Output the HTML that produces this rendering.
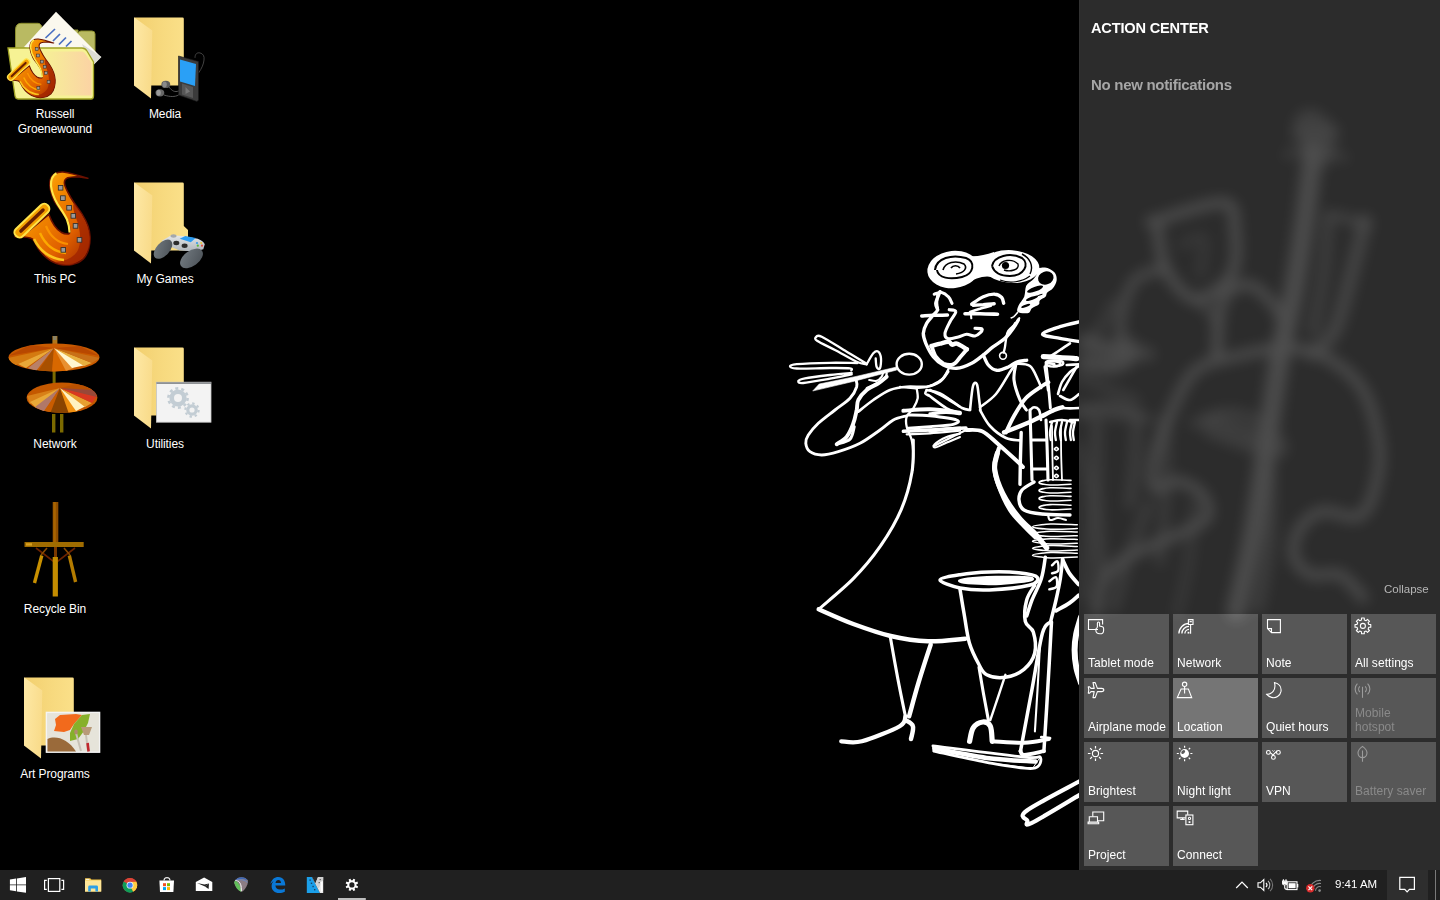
<!DOCTYPE html>
<html>
<head>
<meta charset="utf-8">
<title>Desktop</title>
<style>
*{box-sizing:border-box;margin:0;padding:0}
html,body{width:1440px;height:900px;overflow:hidden;background:#000;font-family:"Liberation Sans",sans-serif;}
#desk{position:absolute;left:0;top:0;width:1440px;height:900px;background:#000;overflow:hidden}
.abs{position:absolute}
/* desktop icons */
.dlabel{position:absolute;width:110px;text-align:center;color:#fff;font-size:12px;line-height:15px;letter-spacing:-0.1px;text-shadow:0 1px 2px #000}
/* action center */
#ac{position:absolute;left:1079px;top:0;width:361px;height:870px;background:#2c2c2c;overflow:hidden;box-shadow:inset 1px 0 0 #313131}
#ac h1,#ac .nn,#ac .col,.tile span,#clock{will-change:transform}
#ac h1{position:absolute;left:12.1px;top:19.4px;font-size:14.6px;line-height:18px;font-weight:bold;color:#fff;letter-spacing:-0.19px;white-space:nowrap}
#ac .nn{position:absolute;left:12px;top:76px;font-size:15px;font-weight:bold;color:#a6a6a6;letter-spacing:-0.3px}
#ac .col{position:absolute;right:11px;top:582px;font-size:11.5px;line-height:14px;color:#b6b6b6}
.tile{position:absolute;width:85px;height:60px;background:rgba(255,255,255,0.205);color:#fff;font-size:12px}
.tile.on{background:rgba(255,255,255,0.35)}
.tile.dis{color:#8a8a8a}
.tile span{position:absolute;left:4px;bottom:4px;line-height:14px;white-space:nowrap;letter-spacing:0.05px}
.tile svg{position:absolute;left:0;top:0}
/* taskbar */
#tb{position:absolute;left:0;top:870px;width:1440px;height:30px;background:#202020}
#clock{position:absolute;left:1335px;top:8px;color:#fff;font-size:11.5px;letter-spacing:0}
</style>
</head>
<body>
<div id="desk">
<!--WALL_START-->
<svg class="abs" style="left:0;top:0" width="1079" height="870" viewBox="0 0 1079 870">
<defs><filter id="wb"><feGaussianBlur stdDeviation="0.45"/></filter></defs><g filter="url(#wb)"><g fill="none" stroke="#fff" stroke-linecap="round" stroke-linejoin="round">
<path d="M940.0 291.7 C939.3 293.6 936.2 300.3 935.8 303.3 C935.4 306.4 937.9 308.1 937.5 310.0 C937.1 311.9 935.1 312.8 933.3 315.0 C931.5 317.2 928.3 320.3 926.7 323.3 C925.0 326.4 923.5 330.0 923.3 333.3 C923.2 336.7 924.2 339.4 925.8 343.3 C927.5 347.2 930.4 353.1 933.3 356.7 C936.2 360.3 939.4 363.1 943.3 365.0 C947.2 366.9 951.9 368.6 956.7 368.3 C961.4 368.1 967.2 365.6 971.7 363.3 C976.1 361.1 979.7 357.8 983.3 355.0 C986.9 352.2 989.7 349.4 993.3 346.7 C996.9 343.9 1001.7 341.4 1005.0 338.3 C1008.3 335.3 1011.1 331.4 1013.3 328.3 C1015.6 325.3 1017.5 321.4 1018.3 320.0" stroke-width="3.4"/>
<path d="M921.7 316.0 C923.6 315.9 929.0 315.5 933.3 315.3 C937.6 315.2 945.1 315.1 947.5 315.0" stroke-width="3.4"/>
<path d="M934.2 294.2 C935.4 293.9 939.3 292.1 941.7 292.5 C944.0 292.9 946.6 294.9 948.3 296.7 C950.1 298.5 951.4 302.2 952.0 303.3" stroke-width="3.1"/>
<path d="M937.5 295.0 C937.4 296.4 936.9 300.8 937.0 303.3 C937.1 305.8 937.8 308.9 938.0 310.0" stroke-width="2.6"/>
<path d="M971.7 304.2 C973.6 302.9 979.4 298.3 983.3 296.7 C987.2 295.0 991.9 294.0 995.0 294.2 C998.1 294.3 1000.2 296.0 1001.7 297.5 C1003.1 299.0 1003.3 302.4 1003.7 303.3" stroke-width="3.4"/>
<path d="M973.3 305.3 C975.0 305.2 979.9 304.9 983.3 304.7 C986.8 304.4 992.4 304.0 994.2 303.8" stroke-width="3.4"/>
<path d="M965.0 313.7 C967.5 313.7 974.6 313.6 980.0 313.7 C985.4 313.8 994.6 314.2 997.5 314.3" stroke-width="3.6"/>
<path d="M970.0 312.0 C971.7 311.4 976.5 309.7 980.0 308.7 C983.5 307.6 989.0 306.3 990.8 305.8" stroke-width="2.6"/>
<path d="M970.8 313.3 C970.9 314.2 971.2 317.5 971.3 318.3" stroke-width="2.1"/>
<path d="M949.2 309.7 C950.3 310.0 955.7 309.7 955.8 311.7 C956.0 313.7 951.8 318.1 950.0 321.7 C948.2 325.3 945.3 330.5 945.0 333.3 C944.7 336.2 946.1 338.1 948.3 338.7 C950.6 339.3 955.3 337.7 958.3 337.0 C961.4 336.3 963.9 334.5 966.7 334.3 C969.4 334.2 972.7 336.3 975.0 336.0 C977.3 335.7 979.2 333.8 980.3 332.7 C981.5 331.5 982.9 329.7 982.0 329.0 C981.1 328.3 976.2 328.4 975.0 328.3" stroke-width="3.1"/>
<path d="M931.3 346.0 C932.8 345.6 937.1 344.4 940.0 343.7 C942.9 342.9 946.7 341.5 948.7 341.7 C950.7 341.8 950.6 344.3 952.0 344.7 C953.4 345.0 954.5 342.9 957.0 343.7 C959.5 344.4 965.3 348.4 967.0 349.3" stroke-width="4.4"/>
<path d="M931.7 346.7 C932.4 348.3 933.8 353.8 935.8 356.7 C937.8 359.5 940.8 362.4 943.7 363.7 C946.6 364.9 950.6 365.4 953.3 364.3 C956.1 363.2 958.1 359.5 960.3 357.0 C962.6 354.5 965.9 350.6 967.0 349.3" stroke-width="3.9"/>
<path d="M1019.2 318.3 C1018.5 319.3 1016.8 322.1 1015.0 324.2 C1013.2 326.2 1009.8 328.6 1008.3 330.8 C1006.9 333.1 1006.9 334.9 1006.3 337.5 C1005.8 340.1 1005.4 344.2 1005.0 346.7 C1004.6 349.2 1003.9 351.5 1003.7 352.5" stroke-width="2.3"/>
<path d="M1015.0 323.3 C1014.3 324.6 1012.2 328.6 1010.8 330.8 C1009.4 333.1 1007.4 335.7 1006.7 336.7" stroke-width="2.3"/>
<path d="M983.3 355.0 C984.2 356.7 986.1 362.4 988.3 365.0 C990.6 367.6 993.3 370.0 996.7 370.3 C1000.0 370.7 1005.0 368.4 1008.3 367.0 C1011.7 365.6 1013.6 363.1 1016.7 362.0 C1019.7 360.9 1025.0 360.6 1026.7 360.3" stroke-width="3.4"/>
<path d="M948.3 370.0 C947.5 371.4 945.8 375.8 943.3 378.3 C940.8 380.8 937.8 383.3 933.3 385.0 C928.9 386.7 922.2 388.1 916.7 388.3 C911.1 388.6 902.8 386.9 900.0 386.7" stroke-width="2.1"/>
<path d="M1080.0 321.7 C1076.7 322.5 1066.2 324.6 1060.0 326.7 C1053.8 328.8 1042.5 332.2 1042.5 334.2 C1042.5 336.1 1053.8 337.1 1060.0 338.3 C1066.2 339.6 1076.7 341.1 1080.0 341.7" stroke-width="3.4"/>
<path d="M1070.0 343.3 C1068.3 344.4 1063.3 347.8 1060.0 350.0 C1056.7 352.2 1051.7 355.6 1050.0 356.7" stroke-width="2.6"/>
<path d="M1043.3 356.7 C1046.1 356.8 1054.4 357.2 1060.0 357.5 C1065.6 357.8 1073.9 358.5 1076.7 358.7" stroke-width="5.2"/>
<path d="M1080.0 364.2 C1077.8 364.3 1068.9 364.9 1066.7 365.0" stroke-width="2.6"/>
<path d="M1076.7 366.7 C1075.6 368.6 1072.2 374.4 1070.0 378.3 C1067.8 382.2 1064.4 388.1 1063.3 390.0" stroke-width="2.6"/>
<path d="M1045.0 366.7 C1045.3 368.6 1046.1 374.4 1046.7 378.3 C1047.2 382.2 1048.1 388.1 1048.3 390.0" stroke-width="3.1"/>
<path d="M866.7 363.7 C863.3 361.7 854.2 356.2 846.7 351.7 C839.2 347.2 826.8 339.1 821.7 336.7 C816.5 334.3 816.5 336.6 815.8 337.3 C815.1 338.1 814.3 338.9 817.5 341.0 C820.7 343.1 828.5 346.6 835.0 350.0 C841.5 353.4 851.4 359.3 856.7 361.7 C861.9 364.1 865.0 363.9 866.7 364.3" stroke-width="2.3"/>
<path d="M866.7 364.2 C867.8 362.4 871.4 355.4 873.3 353.3 C875.3 351.2 877.1 350.8 878.3 351.7 C879.6 352.5 880.7 355.6 881.0 358.3 C881.3 361.1 880.7 366.9 880.0 368.3 C879.3 369.8 877.4 368.7 876.7 367.0 C875.9 365.3 875.8 359.8 875.7 358.3" stroke-width="2.3"/>
<path d="M857.5 363.0 C852.9 363.0 840.1 362.6 830.0 362.8 C819.9 363.0 803.3 363.6 796.7 364.2 C790.0 364.8 790.0 365.6 790.0 366.3 C790.0 367.1 790.0 368.2 796.7 368.5 C803.3 368.8 821.1 368.0 830.0 368.0 C838.9 368.0 846.4 367.9 850.0 368.3 C853.6 368.7 851.1 370.0 851.3 370.3" stroke-width="2.3"/>
<path d="M851.7 373.0 C848.1 373.3 837.8 374.1 830.0 375.0 C822.2 375.9 810.3 377.3 805.0 378.3 C799.7 379.3 798.6 380.2 798.3 381.0 C798.1 381.8 798.1 383.4 803.3 383.0 C808.6 382.6 821.9 380.1 830.0 378.7 C838.1 377.2 848.1 375.1 851.7 374.3" stroke-width="2.3"/>
<path d="M813.0 390.7 L819.2 384.0 L855.0 376.7 L896.7 367.0 L896.7 370.0 L855.0 381.0 Z" stroke-width="0.6" fill="#fff"/>
<path d="M869.2 380.0 C870.4 380.1 874.6 381.4 876.7 380.8 C878.8 380.3 880.6 378.2 881.7 376.7 C882.8 375.1 883.1 372.5 883.3 371.7" stroke-width="2.1"/>
<path d="M886.7 373.3 C886.4 374.2 886.7 376.7 885.0 378.3 C883.3 380.0 879.7 381.7 876.7 383.3 C873.6 385.0 868.3 387.5 866.7 388.3" stroke-width="2.3"/>
<path d="M855.8 378.7 C856.0 380.0 857.6 383.4 856.7 386.7 C855.7 389.9 853.6 394.4 850.0 398.3 C846.4 402.2 840.3 405.8 835.0 410.0 C829.7 414.2 822.8 419.2 818.3 423.3 C813.9 427.5 810.4 431.7 808.3 435.0 C806.2 438.3 805.6 440.6 805.8 443.3 C806.1 446.1 807.4 449.7 810.0 451.7 C812.6 453.6 816.9 455.0 821.7 455.0 C826.4 455.0 831.9 453.6 838.3 451.7 C844.7 449.7 853.1 446.9 860.0 443.3 C866.9 439.7 874.4 433.9 880.0 430.0 C885.6 426.1 888.9 422.4 893.3 420.0 C897.8 417.6 904.4 416.5 906.7 415.8" stroke-width="2.9"/>
<path d="M836.7 444.2 C838.3 442.9 843.9 440.1 846.7 436.7 C849.4 433.2 851.7 427.8 853.3 423.3 C855.0 418.9 855.8 413.9 856.7 410.0 C857.5 406.1 856.7 403.3 858.3 400.0 C860.0 396.7 863.3 392.8 866.7 390.0 C870.0 387.2 875.0 385.6 878.3 383.3 C881.7 381.1 885.3 377.8 886.7 376.7" stroke-width="3.9"/>
<path d="M836.7 444.2 C838.9 443.3 847.1 442.1 850.0 439.2 C852.9 436.2 853.5 428.8 854.2 426.7" stroke-width="3.1"/>
<path d="M858.3 411.7 C860.8 409.7 868.1 403.6 873.3 400.0 C878.6 396.4 884.4 392.2 890.0 390.0 C895.6 387.8 900.6 387.2 906.7 386.7 C912.8 386.1 921.1 387.5 926.7 386.7 C932.2 385.8 936.4 384.2 940.0 381.7 C943.6 379.2 946.9 373.3 948.3 371.7" stroke-width="2.6"/>
<path d="M916.7 388.3 C916.8 390.0 918.2 395.0 917.7 398.3 C917.1 401.7 915.2 405.3 913.3 408.3 C911.5 411.4 907.8 413.6 906.7 416.7 C905.6 419.7 905.8 422.8 906.7 426.7 C907.5 430.6 910.6 435.6 911.7 440.0 C912.8 444.4 913.2 448.3 913.3 453.3 C913.5 458.3 912.6 467.2 912.5 470.0" stroke-width="2.3"/>
<path d="M903.3 410.8 C907.8 410.6 920.6 409.0 930.0 409.3 C939.4 409.6 955.0 412.1 960.0 412.7" stroke-width="3.9"/>
<path d="M908.3 415.0 C911.9 415.1 921.9 415.0 930.0 415.8 C938.1 416.7 952.8 418.6 956.7 420.0 C960.6 421.4 957.8 423.2 953.3 424.3 C948.9 425.4 937.5 426.0 930.0 426.7 C922.5 427.3 911.9 428.1 908.3 428.3" stroke-width="2.9"/>
<path d="M903.3 431.3 C907.8 431.1 920.6 430.5 930.0 430.0 C939.4 429.5 955.0 428.6 960.0 428.3" stroke-width="3.4"/>
<path d="M906.7 434.3 C910.6 434.2 921.1 433.9 930.0 433.3 C938.9 432.7 955.0 431.1 960.0 430.7" stroke-width="2.3"/>
<path d="M960.0 433.7 C957.8 434.2 951.0 435.2 946.7 437.0 C942.4 438.8 936.0 442.9 934.2 444.7 C932.4 446.4 933.8 447.7 935.8 447.3 C937.9 447.0 942.6 444.2 946.7 442.5 C950.7 440.8 957.8 437.9 960.0 437.0" stroke-width="2.1"/>
<path d="M926.7 390.0 C928.9 390.6 934.4 390.6 940.0 393.3 C945.6 396.1 956.7 404.4 960.0 406.7" stroke-width="2.6"/>
<path d="M928.3 395.0 C931.4 397.2 941.4 405.3 946.7 408.3 C951.9 411.4 957.8 412.5 960.0 413.3" stroke-width="2.6"/>
<path d="M926.7 390.0 C926.4 390.6 925.1 392.4 925.3 393.3 C925.6 394.2 927.8 395.0 928.3 395.3" stroke-width="2.6"/>
<path d="M970.0 410.0 C970.5 406.0 971.8 390.3 973.0 386.0 C974.2 381.7 976.0 382.1 977.0 384.4 C978.0 386.7 978.6 395.7 979.2 400.0 C979.8 404.3 980.2 408.3 980.4 410.0" stroke-width="2.6"/>
<path d="M930.0 390.0 C932.7 391.3 940.7 395.0 946.0 398.0 C951.3 401.0 958.0 406.0 962.0 408.0 C966.0 410.0 968.7 409.7 970.0 410.0" stroke-width="2.6"/>
<path d="M930.0 414.0 C932.7 413.7 941.0 412.5 946.0 412.4 C951.0 412.3 957.7 413.4 960.0 413.6" stroke-width="3.4"/>
<path d="M930.0 431.0 C932.7 430.7 940.0 429.5 946.0 429.0 C952.0 428.5 962.7 428.2 966.0 428.0" stroke-width="3.4"/>
<path d="M934.0 446.0 C936.7 444.7 944.7 440.7 950.0 438.0 C955.3 435.3 967.3 429.3 966.0 430.0 C964.7 430.7 947.3 439.3 942.0 442.0 C936.7 444.7 935.3 445.3 934.0 446.0" stroke-width="2.1"/>
<path d="M966.0 430.0 C968.7 430.2 976.7 428.9 982.0 431.2 C987.3 433.5 992.0 438.9 998.0 444.0 C1004.0 449.1 1013.8 458.2 1018.0 462.0 C1022.2 465.8 1022.2 466.2 1023.0 467.0" stroke-width="3.9"/>
<path d="M980.0 410.0 C981.7 412.7 985.7 421.3 990.0 426.0 C994.3 430.7 1001.0 435.6 1006.0 438.0 C1011.0 440.4 1017.7 440.0 1020.0 440.4" stroke-width="2.6"/>
<path d="M980.0 407.2 C982.7 405.0 991.0 399.9 996.0 394.0 C1001.0 388.1 1006.7 377.1 1010.0 372.0 C1013.3 366.9 1015.0 365.0 1016.0 363.6" stroke-width="2.6"/>
<path d="M1016.0 363.6 C1015.7 366.3 1013.3 373.9 1014.0 380.0 C1014.7 386.1 1017.9 395.0 1020.0 400.0 C1022.1 405.0 1025.3 408.3 1026.4 410.0" stroke-width="3.1"/>
<path d="M1016.0 363.6 C1018.3 364.0 1026.3 363.3 1030.0 366.0 C1033.7 368.7 1036.1 376.3 1038.0 380.0 C1039.9 383.7 1040.7 386.7 1041.2 388.0" stroke-width="2.6"/>
<path d="M930.0 386.0 C932.0 384.8 938.8 382.0 942.0 379.0 C945.2 376.0 947.8 369.8 949.0 368.0" stroke-width="2.1"/>
<path d="M999.0 448.0 C998.2 451.0 994.6 460.0 994.4 466.0 C994.2 472.0 995.4 476.7 998.0 484.0 C1000.6 491.3 1005.7 503.0 1010.0 510.0 C1014.3 517.0 1019.8 521.5 1024.0 526.0 C1028.2 530.5 1033.2 535.2 1035.0 537.0" stroke-width="4.2"/>
<path d="M1006.0 432.4 C1007.3 429.7 1010.7 421.7 1014.0 416.0 C1017.3 410.3 1021.3 403.0 1026.0 398.0 C1030.7 393.0 1038.3 388.6 1042.0 386.0 C1045.7 383.4 1047.3 383.0 1048.4 382.4" stroke-width="3.9"/>
<path d="M1004.0 432.4 C1008.3 430.7 1021.7 425.7 1030.0 422.0 C1038.3 418.3 1048.6 412.5 1054.0 410.0 C1059.4 407.5 1061.0 407.7 1062.4 407.2" stroke-width="4.4"/>
<path d="M1046.0 364.0 C1046.4 367.7 1047.7 378.7 1048.4 386.0 C1049.1 393.3 1050.1 404.3 1050.4 408.0" stroke-width="2.9"/>
<path d="M1021.2 432.4 C1021.1 437.0 1020.6 451.3 1020.4 460.0 C1020.2 468.7 1020.1 480.3 1020.0 484.4" stroke-width="3.4"/>
<path d="M1030.0 410.0 C1030.2 415.7 1030.7 432.3 1031.0 444.0 C1031.3 455.7 1031.8 474.0 1032.0 480.0" stroke-width="3.1"/>
<path d="M1046.0 420.0 C1046.2 425.0 1046.9 440.0 1047.2 450.0 C1047.5 460.0 1047.9 475.0 1048.0 480.0" stroke-width="3.1"/>
<path d="M1032.0 440.0 C1034.4 440.0 1044.0 440.0 1046.4 440.0" stroke-width="2.9"/>
<path d="M1032.0 469.0 C1034.5 469.0 1044.5 469.0 1047.0 469.0" stroke-width="2.9"/>
<path d="M1030.0 410.0 C1030.7 409.5 1032.5 407.2 1034.0 407.2 C1035.5 407.2 1037.8 407.9 1039.0 410.0 C1040.2 412.1 1040.7 418.3 1041.0 420.0" stroke-width="2.6"/>
<path d="M1054.4 449.0 C1054.4 448.5 1055.7 447.4 1056.4 447.4 C1057.1 447.4 1058.4 448.5 1058.4 449.0 C1058.4 449.5 1057.1 450.6 1056.4 450.6 C1055.7 450.6 1054.4 449.5 1054.4 449.0Z" stroke-width="1.6"/>
<path d="M1054.4 458.0 C1054.4 457.5 1055.7 456.4 1056.4 456.4 C1057.1 456.4 1058.4 457.5 1058.4 458.0 C1058.4 458.5 1057.1 459.6 1056.4 459.6 C1055.7 459.6 1054.4 458.5 1054.4 458.0Z" stroke-width="1.6"/>
<path d="M1054.4 468.0 C1054.4 467.5 1055.7 466.4 1056.4 466.4 C1057.1 466.4 1058.4 467.5 1058.4 468.0 C1058.4 468.5 1057.1 469.6 1056.4 469.6 C1055.7 469.6 1054.4 468.5 1054.4 468.0Z" stroke-width="1.6"/>
<path d="M1054.4 476.0 C1054.4 475.5 1055.7 474.4 1056.4 474.4 C1057.1 474.4 1058.4 475.5 1058.4 476.0 C1058.4 476.5 1057.1 477.6 1056.4 477.6 C1055.7 477.6 1054.4 476.5 1054.4 476.0Z" stroke-width="1.6"/>
<path d="M1052.0 426.0 C1052.1 431.0 1052.2 447.0 1052.4 456.0 C1052.6 465.0 1052.9 476.0 1053.0 480.0" stroke-width="1.8"/>
<path d="M1061.0 426.0 C1061.0 431.0 1061.0 447.0 1061.2 456.0 C1061.4 465.0 1061.9 476.0 1062.0 480.0" stroke-width="1.8"/>
<path d="M1052.0 422.0 C1051.7 423.7 1050.2 429.0 1050.0 432.0 C1049.8 435.0 1050.7 438.7 1050.8 440.0" stroke-width="2.3"/>
<path d="M1057.0 422.0 C1056.7 423.7 1055.2 429.0 1055.0 432.0 C1054.8 435.0 1055.7 438.7 1055.8 440.0" stroke-width="2.3"/>
<path d="M1062.0 422.0 C1061.7 423.7 1060.2 429.0 1060.0 432.0 C1059.8 435.0 1060.7 438.7 1060.8 440.0" stroke-width="2.3"/>
<path d="M1067.0 422.0 C1066.7 423.7 1065.2 429.0 1065.0 432.0 C1064.8 435.0 1065.7 438.7 1065.8 440.0" stroke-width="2.3"/>
<path d="M1072.0 422.0 C1071.7 423.7 1070.2 429.0 1070.0 432.0 C1069.8 435.0 1070.7 438.7 1070.8 440.0" stroke-width="2.3"/>
<path d="M1075.0 422.0 C1074.7 423.7 1073.2 429.0 1073.0 432.0 C1072.8 435.0 1073.7 438.7 1073.8 440.0" stroke-width="2.3"/>
<path d="M1050.0 422.0 C1052.0 421.7 1058.0 419.9 1062.0 420.0 C1066.0 420.1 1072.0 422.0 1074.0 422.4" stroke-width="2.3"/>
<path d="M1054.0 364.0 C1052.7 363.5 1046.7 363.3 1046.0 362.8 C1045.3 362.3 1047.3 361.0 1050.0 360.8 C1052.7 360.6 1060.0 360.9 1062.0 361.6 C1064.0 362.3 1063.3 364.1 1062.0 364.8 C1060.7 365.5 1055.3 366.1 1054.0 366.0 C1052.7 365.9 1055.3 364.5 1054.0 364.0Z" stroke-width="2.6"/>
<path d="M1058.0 394.0 C1058.7 392.0 1060.0 385.7 1062.0 382.0 C1064.0 378.3 1067.2 374.7 1070.0 372.0 C1072.8 369.3 1077.5 367.0 1079.0 366.0" stroke-width="2.6"/>
<path d="M1060.0 396.0 C1061.7 396.7 1066.8 400.3 1070.0 400.0 C1073.2 399.7 1077.5 395.0 1079.0 394.0" stroke-width="2.6"/>
<path d="M1062.0 408.0 C1063.3 408.1 1067.2 408.4 1070.0 408.4 C1072.8 408.4 1077.5 408.1 1079.0 408.0" stroke-width="2.6"/>
<path d="M1070.0 420.0 C1071.5 420.0 1077.5 420.0 1079.0 420.0" stroke-width="2.6"/>
<path d="M1034.0 482.0 C1032.0 483.3 1024.5 487.0 1022.0 490.0 C1019.5 493.0 1018.7 496.7 1019.0 500.0 C1019.3 503.3 1020.2 507.7 1024.0 510.0 C1027.8 512.3 1034.3 513.2 1042.0 514.0 C1049.7 514.8 1065.3 514.8 1070.0 515.0" stroke-width="3.4"/>
<path d="M1071.0 480.4 C1067.5 480.3 1055.3 479.5 1050.0 479.8 C1044.7 480.1 1039.0 481.5 1039.0 482.4 C1039.0 483.3 1044.7 484.7 1050.0 485.0 C1055.3 485.3 1067.5 484.3 1071.0 484.2" stroke-width="1.6"/>
<path d="M1071.0 488.4 C1067.5 488.3 1055.3 487.5 1050.0 487.8 C1044.7 488.1 1039.0 489.5 1039.0 490.4 C1039.0 491.3 1044.7 492.7 1050.0 493.0 C1055.3 493.3 1067.5 492.3 1071.0 492.2" stroke-width="1.6"/>
<path d="M1071.0 496.4 C1067.5 496.3 1055.3 495.5 1050.0 495.8 C1044.7 496.1 1039.0 497.5 1039.0 498.4 C1039.0 499.3 1044.7 500.7 1050.0 501.0 C1055.3 501.3 1067.5 500.3 1071.0 500.2" stroke-width="1.6"/>
<path d="M1071.0 505.2 C1067.5 505.1 1055.3 504.3 1050.0 504.6 C1044.7 504.9 1039.0 506.3 1039.0 507.2 C1039.0 508.1 1044.7 509.5 1050.0 509.8 C1055.3 510.1 1067.5 509.1 1071.0 509.0" stroke-width="1.6"/>
<path d="M1048.0 514.0 C1048.3 515.0 1048.3 519.3 1050.0 520.0 C1051.7 520.7 1055.3 518.0 1058.0 518.0 C1060.7 518.0 1064.7 519.7 1066.0 520.0" stroke-width="2.1"/>
<path d="M913.3 440.0 C913.1 445.3 914.0 460.4 912.0 472.0 C910.0 483.6 906.7 496.9 901.3 509.3 C896.0 521.8 888.0 535.1 880.0 546.7 C872.0 558.2 863.6 568.2 853.3 578.7 C843.1 589.1 824.4 604.2 818.7 609.3" stroke-width="3.1"/>
<path d="M818.7 609.3 C824.4 611.8 841.3 619.6 853.3 624.0 C865.3 628.4 878.2 633.1 890.7 636.0 C903.1 638.9 915.6 640.9 928.0 641.3 C940.4 641.8 959.1 639.1 965.3 638.7" stroke-width="4.5"/>
<path d="M997.3 453.3 C996.9 456.0 993.8 462.7 994.7 469.3 C995.6 476.0 998.7 485.3 1002.7 493.3 C1006.7 501.3 1013.3 510.7 1018.7 517.3 C1024.0 524.0 1030.0 528.2 1034.7 533.3 C1039.3 538.4 1044.7 545.6 1046.7 548.0" stroke-width="5.2"/>
<path d="M940.0 580.0 C940.0 577.8 951.8 576.0 960.0 574.7 C968.2 573.3 979.6 572.3 989.3 572.0 C999.1 571.7 1010.7 571.9 1018.7 572.8 C1026.7 573.7 1035.6 575.2 1037.3 577.3 C1039.1 579.4 1037.3 583.2 1029.3 585.3 C1021.3 587.4 1000.9 589.4 989.3 589.9 C977.8 590.3 968.2 589.6 960.0 588.0 C951.8 586.4 940.0 582.2 940.0 580.0Z" stroke-width="3.5"/>
<path d="M960.0 580.8 C960.0 579.9 984.0 578.2 996.0 577.9 C1008.0 577.6 1032.0 578.0 1032.0 578.9 C1032.0 579.8 1008.0 582.9 996.0 583.2 C984.0 583.5 960.0 581.7 960.0 580.8Z" stroke-width="4.2" fill="#fff"/>
<path d="M960.0 589.3 C960.7 593.3 962.4 604.4 964.0 613.3 C965.6 622.2 966.9 634.2 969.3 642.7 C971.8 651.1 975.8 658.7 978.7 664.0 C981.6 669.3 982.2 672.4 986.7 674.7 C991.1 676.9 999.1 678.2 1005.3 677.3 C1011.6 676.4 1019.1 673.3 1024.0 669.3 C1028.9 665.3 1033.1 659.6 1034.7 653.3 C1036.2 647.1 1034.9 637.3 1033.3 632.0 C1031.8 626.7 1026.4 626.7 1025.3 621.3 C1024.2 616.0 1025.1 606.0 1026.7 600.0 C1028.2 594.0 1033.3 587.8 1034.7 585.3" stroke-width="3.5"/>
<path d="M1077.3 524.8 C1072.9 524.7 1058.1 523.7 1050.7 524.0 C1043.2 524.3 1032.5 525.8 1032.5 526.7 C1032.5 527.6 1043.2 529.0 1050.7 529.3 C1058.1 529.6 1072.9 528.7 1077.3 528.5" stroke-width="1.5"/>
<path d="M1077.3 532.0 C1072.9 531.9 1058.1 530.9 1050.7 531.2 C1043.2 531.5 1032.5 533.0 1032.5 533.9 C1032.5 534.8 1043.2 536.2 1050.7 536.5 C1058.1 536.8 1072.9 535.9 1077.3 535.7" stroke-width="1.5"/>
<path d="M1077.3 539.5 C1072.9 539.3 1058.1 538.4 1050.7 538.7 C1043.2 539.0 1032.5 540.4 1032.5 541.3 C1032.5 542.2 1043.2 543.7 1050.7 544.0 C1058.1 544.3 1072.9 543.3 1077.3 543.2" stroke-width="1.5"/>
<path d="M1077.3 546.4 C1072.9 546.3 1058.1 545.3 1050.7 545.6 C1043.2 545.9 1032.5 547.4 1032.5 548.3 C1032.5 549.2 1043.2 550.6 1050.7 550.9 C1058.1 551.2 1072.9 550.3 1077.3 550.1" stroke-width="1.5"/>
<path d="M1077.3 553.3 C1072.9 553.2 1058.1 552.2 1050.7 552.5 C1043.2 552.8 1032.5 554.3 1032.5 555.2 C1032.5 556.1 1043.2 557.6 1050.7 557.9 C1058.1 558.2 1072.9 557.2 1077.3 557.1" stroke-width="1.5"/>
<path d="M1052.0 565.3 C1052.9 564.7 1056.3 560.4 1057.3 561.3 C1058.4 562.2 1059.0 568.7 1058.1 570.7 C1057.2 572.7 1053.0 572.9 1052.0 573.3" stroke-width="2.4"/>
<path d="M1049.3 581.3 C1050.4 580.7 1054.8 576.4 1056.0 577.3 C1057.2 578.2 1057.6 584.7 1056.5 586.7 C1055.4 588.7 1050.5 588.9 1049.3 589.3" stroke-width="2.4"/>
<path d="M1045.3 557.3 C1044.7 560.9 1043.6 571.6 1041.3 578.7 C1039.1 585.8 1034.4 593.8 1032.0 600.0 C1029.6 606.2 1027.6 613.3 1026.7 616.0" stroke-width="3.5"/>
<path d="M1062.7 558.7 C1062.3 562.0 1061.4 571.8 1060.3 578.7 C1059.2 585.6 1057.6 592.9 1056.0 600.0 C1054.4 607.1 1051.6 617.8 1050.7 621.3" stroke-width="3.5"/>
<path d="M1062.7 560.0 C1063.8 562.2 1066.7 569.2 1069.3 573.3 C1072.0 577.4 1077.1 582.7 1078.7 584.5" stroke-width="3.9"/>
<path d="M1056.0 610.7 C1058.2 609.4 1065.6 605.8 1069.3 603.2 C1073.1 600.6 1077.1 596.5 1078.7 595.2" stroke-width="3.9"/>
<path d="M890.3 637.0 C891.5 644.0 895.3 665.4 897.8 678.6 C900.3 691.8 904.1 710.0 905.4 716.3" stroke-width="3.1"/>
<path d="M930.7 644.6 C928.6 650.9 922.2 670.4 918.6 682.4 C915.0 694.3 910.7 710.7 909.1 716.3" stroke-width="4.5"/>
<path d="M905.4 716.3 C904.4 718.0 906.9 722.0 899.7 726.2 C892.5 730.3 871.7 738.7 861.9 741.3 C852.2 743.8 844.6 741.3 841.2 741.3" stroke-width="4.2"/>
<path d="M905.4 720.1 C906.6 721.1 912.0 723.0 912.9 726.2 C913.9 729.3 911.3 736.9 911.0 739.0" stroke-width="4.5"/>
<path d="M979.0 667.3 C979.7 671.7 982.0 684.9 983.5 693.7 C985.1 702.5 987.6 715.7 988.4 720.1" stroke-width="3.1"/>
<path d="M1005.4 674.8 C1004.2 678.6 1000.4 689.9 997.9 697.5 C995.4 705.0 991.6 716.3 990.3 720.1" stroke-width="2.4"/>
<path d="M969.6 741.3 C970.2 739.0 971.1 730.9 973.3 727.7 C975.5 724.5 979.9 722.3 982.8 722.0 C985.6 721.8 988.7 722.9 990.3 726.2 C991.9 729.4 991.9 738.7 992.2 741.3" stroke-width="5.2"/>
<path d="M992.2 741.3 C997.6 741.5 1014.9 743.1 1024.3 742.8 C1033.7 742.4 1044.8 739.6 1048.8 739.0" stroke-width="3.9"/>
<path d="M932.9 745.8 L1024.3 757.1 L1040.2 757.1 L1032.6 768.4 L986.5 762.4 L933.7 751.1 Z" stroke-width="1.0"/>
<path d="M934.4 748.4 C943.1 750.0 969.7 755.7 986.5 757.9 C1003.4 760.1 1027.4 761.0 1035.6 761.6" stroke-width="4.5"/>
<path d="M932.9 745.8 C948.2 747.7 1006.4 755.2 1024.3 757.1 C1042.2 759.0 1038.8 755.2 1040.2 757.1 C1041.5 759.0 1041.5 767.6 1032.6 768.4 C1023.7 769.3 1003.0 765.3 986.5 762.4 C970.1 759.5 942.5 753.0 933.7 751.1" stroke-width="2.8"/>
<path d="M1050.7 621.9 C1049.3 623.8 1045.6 621.9 1042.4 633.3 C1039.3 644.6 1035.5 670.3 1031.9 689.9 C1028.2 709.5 1022.4 740.9 1020.5 751.1" stroke-width="3.5"/>
<path d="M1051.5 621.9 C1050.9 633.3 1049.0 668.4 1047.7 689.9 C1046.5 711.4 1044.6 740.9 1043.9 751.1" stroke-width="3.5"/>
<path d="M1020.5 751.1 C1021.2 751.7 1020.4 754.9 1024.3 754.9 C1028.2 754.9 1040.7 751.7 1043.9 751.1" stroke-width="3.9"/>
<path d="M1041.3 737.1 C1042.7 737.3 1048.5 738.0 1050.0 738.2" stroke-width="2.8"/>
<path d="M1040.2 640.8 C1039.7 649.0 1038.4 674.8 1037.5 689.9 C1036.6 705.0 1035.3 724.5 1034.9 731.4" stroke-width="2.1"/>
<path d="M1081.0 617.0 C1080.2 619.8 1077.3 628.5 1076.2 634.0 C1075.1 639.5 1074.6 644.3 1074.6 650.0 C1074.6 655.7 1075.3 662.5 1076.4 668.0 C1077.5 673.5 1080.2 680.5 1081.0 683.0" stroke-width="6.0"/>
<path d="M1080.9 780.5 C1071.9 785.6 1035.5 804.1 1026.6 810.7 C1017.6 817.4 1026.4 818.5 1027.3 820.5 C1028.2 822.6 1022.9 827.2 1031.9 822.8 C1040.8 818.4 1072.8 798.9 1080.9 794.1" stroke-width="4.2"/>
</g>

<g>
<ellipse cx="953.3" cy="269.5" rx="26" ry="18.6" fill="#fff" transform="rotate(-6 953.3 269.5)"/>
<ellipse cx="1011" cy="266.5" rx="28.5" ry="16.4" fill="#fff" transform="rotate(4 1011 266.5)"/>
<path d="M968 256 Q981 257 994 252 L996 278 Q982 273 966 284 Z" fill="#fff"/>
<path d="M935 270 C936 258 952 254 966 258 C976 262 974 274 962 277 C950 280 938 278 937 270" fill="none" stroke="#000" stroke-width="2"/>
<path d="M943 270 C945 262 956 260 964 264 C968 268 964 273 956 274" fill="none" stroke="#000" stroke-width="1.6"/>
<path d="M951 268 C953 265 958 265 960 268" fill="none" stroke="#000" stroke-width="1.6"/>
<path d="M992 266 C994 256 1010 252 1022 258 C1030 264 1024 276 1010 276 C1000 276 994 272 992 266" fill="none" stroke="#000" stroke-width="2"/>
<path d="M999 266 C1001 260 1012 258 1018 264 C1020 270 1010 272 1004 270" fill="none" stroke="#000" stroke-width="1.4"/>
<circle cx="1005.5" cy="265.5" r="3.6" fill="#000"/>
<path d="M1022 254 C1030 258 1034 266 1030 274" fill="none" stroke="#000" stroke-width="1.4"/>
<path d="M1000 280 C1010 284 1022 282 1030 276" fill="none" stroke="#000" stroke-width="1.2"/>
</g><path d="M1034.6 269.7 C1036.0 268.6 1041.7 267.2 1045.0 267.6 C1048.3 268.0 1052.4 270.2 1054.4 272.3 C1056.3 274.4 1056.9 277.5 1056.7 280.1 C1056.5 282.7 1054.7 286.0 1053.1 288.1 C1051.6 290.2 1048.6 291.2 1047.3 292.6 C1046.0 294.0 1046.8 295.5 1045.5 296.8 C1044.3 298.1 1040.9 299.1 1039.8 300.4 C1038.7 301.7 1040.1 303.3 1038.8 304.6 C1037.4 305.9 1033.7 306.8 1032.0 308.2 C1030.2 309.6 1030.7 312.3 1028.3 312.9 C1026.0 313.6 1019.5 313.4 1017.9 312.1 C1016.3 310.8 1017.7 307.7 1018.8 305.1 C1019.8 302.6 1022.9 300.0 1024.2 296.8 C1025.4 293.6 1024.9 288.6 1026.2 285.8 C1027.6 283.1 1030.8 282.1 1032.5 280.1 C1034.2 278.1 1036.3 275.6 1036.7 273.9 C1037.0 272.1 1033.2 270.7 1034.6 269.7Z" fill="#fff"/>
<ellipse cx="1045.8" cy="278.0" rx="7.9" ry="6.5" fill="#000" transform="rotate(-20 1045.8 278.0)"/>
<ellipse cx="1035.1" cy="289.2" rx="8.5" ry="2.3" fill="#000" transform="rotate(-20 1035.1 289.2)"/>
<ellipse cx="1032.0" cy="298.3" rx="6.5" ry="1.6" fill="#000" transform="rotate(-20 1032.0 298.3)"/>
<ellipse cx="1025.7" cy="305.8" rx="4.8" ry="1.2" fill="#000" transform="rotate(-20 1025.7 305.8)"/>
<ellipse cx="1039.8" cy="295.0" rx="3.1" ry="0.6" fill="#000" transform="rotate(-20 1039.8 295.0)"/>
<path d="M1017.9 312.1 C1017.2 312.8 1015.0 315.6 1013.8 316.6 C1012.5 317.6 1011.1 317.9 1010.6 318.1" fill="none" stroke="#fff" stroke-width="1.6"/>
<ellipse cx="909.2" cy="364.2" rx="12.6" ry="10.4" fill="none" stroke="#fff" stroke-width="2.4"/>
<circle cx="1003" cy="355.8" r="3.4" fill="none" stroke="#fff" stroke-width="1.6"/>
<ellipse cx="1053.5" cy="364" rx="7" ry="2.6" fill="none" stroke="#fff" stroke-width="2.2"/>
</g></svg>
<!--WALL_END-->
<!--ICONS_START-->
<svg width="0" height="0" style="position:absolute">
<defs>
<linearGradient id="fb" x1="0" y1="0" x2="1" y2="0"><stop offset="0" stop-color="#f2cf6e"/><stop offset="0.5" stop-color="#f7d97e"/><stop offset="1" stop-color="#fbe18b"/></linearGradient>
<linearGradient id="ff" x1="0" y1="0" x2="1" y2="0.3"><stop offset="0" stop-color="#fee9a6"/><stop offset="1" stop-color="#f9dc8c"/></linearGradient>
<g id="folder">
<path d="M0.5 0.5 H48.5 Q49.8 0.5 49.8 1.8 V44 L54 48 V68.5 H0.5 Z" fill="url(#fb)"/>
<path d="M0 0.3 L18.3 13.6 L17 81.6 L0 68.4 Z" fill="url(#ff)"/>
</g>
<linearGradient id="sx" x1="0" y1="0" x2="1" y2="1"><stop offset="0" stop-color="#ffd23a"/><stop offset="0.35" stop-color="#f59000"/><stop offset="0.7" stop-color="#e06000"/><stop offset="1" stop-color="#9a2400"/></linearGradient>
<g id="sax">
<path d="M87.8 18.3 C80 15.8 72 13.2 63 12 C57 11.6 50.5 15 50 21.5 C49.4 27 50.5 33 54.4 41.1 C57 46 59.5 48.5 62.2 52.2 C65 56 66.6 58.5 67.8 61.1 C69.4 65 69.8 69 70 72.2 L68.9 73.9 C66 74.2 63.5 73.6 61.1 72.2 C58 70.2 56 68 54.4 65.6 C52 62 50.2 58 48.9 54.4 L30 70 L15 76.7 C22 77 28 76.6 32.2 78.9 C35 81 36 84.5 37.8 87.8 C40 91.5 43 95 46.7 97.8 C50.5 101 55 103.4 60 104.4 C64 105.2 68.4 105.2 72.2 104.4 C76.4 103.6 80.4 101.6 83.3 98.9 C86.2 96 88 92 88.9 87.8 C89.8 84 90.2 80.4 90 76.7 C89.8 73 89 69 87.8 65.6 C86.4 61.6 84.4 58 82.2 54.4 C79.8 50.6 77 47 74.4 43.3 C72 39.8 69.6 36 67.8 32.2 C66.2 29 64.6 26 64.4 23.3 C64.2 20.4 65.6 18.6 67.8 17.8 C70.4 17 73.6 16.8 76.7 16.7 C80.6 16.9 84.4 17.8 87.8 18.3 Z" fill="url(#sx)" stroke="#6a1000" stroke-width="1.6" stroke-linejoin="round"/>
<path d="M74 43 C82 54 89 66 90 78 C90.5 90 84 100 72 104.4 C66 105.6 60 104.6 54 102 C64 102 74 98 78 90 C82 80 80 68 76 58 C74 52 72 47 74 43 Z" fill="#a02400" opacity=".8"/>
<path d="M56.5 13.2 C52 15.5 50.6 20 51 26 C51.6 32 54 38 57.5 44 C61 49.5 64.5 54 67 59.5 C68.8 64 69.4 68 69.6 72.5" fill="none" stroke="#ffe84a" stroke-width="2.2"/>
<path d="M34 79 C39 90 50 99 64 100" fill="none" stroke="#ffd020" stroke-width="2.6" opacity=".9"/>
<path d="M40 73 C45 84 54 92 66 93" fill="none" stroke="#ffb400" stroke-width="2.4" opacity=".85"/>
<path d="M46 66 C50 76 58 83 68 84" fill="none" stroke="#ff9c00" stroke-width="2.2" opacity=".8"/>
<rect x="9.9" y="55.6" width="44" height="10" rx="4.6" transform="rotate(-43.6 31.9 60.6)" fill="#f4a000" stroke="#ffe44a" stroke-width="2"/>
<rect x="15" y="58.9" width="34" height="3.4" rx="1.7" transform="rotate(-43.6 31.9 60.6)" fill="#6a2000"/>
<g fill="#9a9a9a" stroke="#2a2a2a" stroke-width=".8"><rect x="58.3" y="25.5" width="4.6" height="4.6"/><rect x="60.6" y="35.8" width="4.6" height="4.6"/><rect x="66.8" y="45.5" width="4.6" height="4.6"/><rect x="71" y="53.6" width="4.6" height="4.6"/><rect x="73.2" y="63.6" width="4.6" height="4.6"/><rect x="77.2" y="77.6" width="4.6" height="4.6"/><rect x="61" y="87.6" width="4.6" height="4.6"/></g>
</g>
</defs>
</svg>

<!-- Russell Groenewound -->
<svg class="abs" style="left:0;top:0" width="110" height="110" viewBox="0 0 110 110">
<defs><linearGradient id="pch" x1="0" y1="0" x2="1" y2="0"><stop offset="0" stop-color="#f6f294"/><stop offset="0.45" stop-color="#f8e49c"/><stop offset="1" stop-color="#fbd3a4"/></linearGradient></defs>
<path d="M15.5 30 Q15.5 23.5 21 23.3 H38 Q40 23.3 41 25 L43.5 30 H78 V33 Q79 31 81 31 H92 Q95 31 95 34 V62 H15.5 Z" fill="#b9ba62" stroke="#8d8f2e" stroke-width="1"/>
<path d="M56 11.7 L101 57 L90 68 L24 47 Z" fill="#fbf8ee"/>
<path d="M101.5 57 L91 67.5 L82 44 Z" fill="#dcdcd4"/>
<g stroke="#4a6fc2" stroke-width="1.7"><path d="M45.5 38 L55 29"/><path d="M53 41 L60 34"/><path d="M59 44.5 L66 37.5"/><path d="M66 46.5 L71.5 41"/></g>
<path d="M8 48 H82 Q85 48 87 51 L93.5 62 V96 Q93.5 99 91 99 H18 Q15.5 99 15 96 Z" fill="#f6f294" stroke="#a0a224" stroke-width="1.3"/>
<path d="M40 51.5 H82 Q84 51.5 85.5 54 L91.5 63 V95.5 H44 Z" fill="url(#pch)"/>
<g transform="translate(-1.5,31.5) scale(0.63)"><use href="#sax"/></g>
</svg>
<div class="dlabel" style="left:0;top:107px">Russell<br>Groenewound</div>

<!-- Media -->
<svg class="abs" style="left:134px;top:17px;overflow:visible" width="80" height="90"><use href="#folder"/>
<path d="M61 40.8 C61 37 63 35.4 65.9 35.9 C69 36.6 70.6 39 70 43 C69.6 47 68 51 64.5 56" fill="none" stroke="#4a4a4a" stroke-width="0.9"/>
<path d="M44.5 39 L64.5 44.5 L64.5 83 L63 84.5 L44.5 78 Z" fill="#3b3b3b" stroke="#1a1a1a" stroke-width=".6"/>
<path d="M46 42.5 L62 47 L61 69 L46 64.5 Z" fill="#2aa0f6"/>
<path d="M48 66.5 L59 70 L59 81 L48 77.5 Z" fill="#565656"/>
<path d="M51.5 70 L56 74.5 L51.5 77 Z" fill="#777"/>
<ellipse cx="31.8" cy="67.4" rx="4.4" ry="3.6" fill="#5c5c5c"/><ellipse cx="30.6" cy="67.4" rx="2.2" ry="3" fill="#8a8a8a"/><ellipse cx="25.9" cy="75.8" rx="4.4" ry="3.6" fill="#666"/><ellipse cx="24.6" cy="75.8" rx="2.2" ry="3" fill="#9a9a9a"/>
<path d="M35 70 C38 74 41 75.5 44.5 74 M30 78 C36 80 41 80 44.5 78" fill="none" stroke="#555" stroke-width="1"/>
</svg>
<div class="dlabel" style="left:110px;top:107px">Media</div>

<!-- This PC -->
<svg class="abs" style="left:0;top:160px" width="110" height="110"><use href="#sax"/></svg>
<div class="dlabel" style="left:0;top:272px">This PC</div>

<!-- My Games -->
<svg class="abs" style="left:134px;top:182px;overflow:visible" width="80" height="90"><use href="#folder"/>
<defs><linearGradient id="gp" x1="0" y1="0" x2="0" y2="1"><stop offset="0" stop-color="#e4e7ea"/><stop offset="1" stop-color="#aeb4ba"/></linearGradient>
<linearGradient id="gr" x1="0" y1="0" x2="1" y2="1"><stop offset="0" stop-color="#747c82"/><stop offset="1" stop-color="#4a5056"/></linearGradient></defs>
<path d="M27.7 58.8 L37.4 53.3 L48.5 54 L63.8 56.8 Q70.7 60 70.7 62.5 L69.3 67.2 L61 69.5 L45.7 68.5 L37.4 65 Z" fill="url(#gp)"/>
<ellipse cx="29" cy="67.2" rx="11.6" ry="6.6" transform="rotate(-47 29 67.2)" fill="url(#gr)"/>
<ellipse cx="57.5" cy="76.4" rx="13" ry="7.6" transform="rotate(-36 57.5 76.4)" fill="url(#gr)"/>
<path d="M45.7 56.8 L51.3 54 L61.7 56 L56.8 60.2 Z" fill="#2b9cf2"/>
<ellipse cx="39.5" cy="54" rx="3" ry="1.7" fill="#a4a8ac"/>
<ellipse cx="42.3" cy="61" rx="3" ry="2.2" fill="#2c2c2c"/><ellipse cx="50.6" cy="63.7" rx="3" ry="2.2" fill="#2c2c2c"/>
<circle cx="63" cy="61" r="1.1" fill="#3a9be8"/><circle cx="67.2" cy="61" r="1.1" fill="#e8c83a"/><circle cx="63.8" cy="63.7" r="1.1" fill="#58b838"/><circle cx="68" cy="63.7" r="1.1" fill="#e05040"/>
</svg>
<div class="dlabel" style="left:110px;top:272px">My Games</div>

<!-- Network (cymbals) -->
<svg class="abs" style="left:0;top:330px" width="110" height="110">
<defs><clipPath id="c1"><ellipse cx="54" cy="27.4" rx="45.5" ry="14"/></clipPath><clipPath id="c2"><ellipse cx="62" cy="67.8" rx="35.4" ry="15.2"/></clipPath></defs>
<rect x="52.4" y="6" width="5" height="13" fill="#b0761a"/><rect x="53" y="6" width="3.6" height="4" fill="#8a8266"/>
<rect x="52.6" y="41" width="3" height="13" fill="#7c6a00"/>
<rect x="52" y="84" width="3.4" height="18.5" fill="#7c6a00"/><rect x="60" y="84" width="3.4" height="18.5" fill="#7c6a00"/>
<g clip-path="url(#c1)"><rect x="0" y="10" width="110" height="35" fill="#c85a00"/>
<path d="M54 18 L8 28 L14 36 Z" fill="#d47a10"/><path d="M54 18 L18 34 L26 38 Z" fill="#e8a838"/><path d="M54 18 L28 38 L36 41 Z" fill="#b88068"/><path d="M54 18 L38 41 L52 42 Z" fill="#a85000"/>
<path d="M54 18 L52 42 L68 41 Z" fill="#d86800"/><path d="M54 18 L66 41 L74 38 Z" fill="#e89030"/><path d="M54 18 L72 38 L86 35 Z" fill="#fff6d0"/><path d="M54 18 L84 36 L92 33 Z" fill="#e8b040"/><path d="M54 18 L92 33 L100 28 Z" fill="#c87018"/>
<path d="M54 18 L8 26 L30 15 Z" fill="#b84800"/><path d="M54 18 L100 26 L80 16 Z" fill="#b84800"/></g>
<g clip-path="url(#c2)"><rect x="20" y="50" width="90" height="35" fill="#c45800"/>
<path d="M60 58 L27 66 L30 74 Z" fill="#d88018"/><path d="M60 58 L30 72 L36 78 Z" fill="#e8a838"/><path d="M60 58 L35 77 L44 82 Z" fill="#b07868"/><path d="M60 58 L44 81 L52 84 Z" fill="#c85c00"/><path d="M60 58 L50 84 L70 84 Z" fill="#8a4400"/>
<path d="M60 58 L69 84 L78 81 Z" fill="#f09010"/><path d="M60 58 L76 81 L86 76 Z" fill="#fff2c0"/><path d="M60 58 L85 77 L92 73 Z" fill="#e8a030"/><path d="M60 58 L92 73 L97 66 Z" fill="#d83820"/><path d="M60 58 L97 67 L94 58 Z" fill="#984838"/><path d="M60 58 L94 60 L80 53 Z" fill="#b85000"/></g>
</svg>
<div class="dlabel" style="left:0;top:437px">Network</div>

<!-- Utilities -->
<svg class="abs" style="left:134px;top:347px;overflow:visible" width="80" height="90"><use href="#folder"/>
<rect x="22.4" y="35.2" width="54.6" height="40" fill="#f3f3f3" stroke="#c4c4c4" stroke-width=".8"/>
<rect x="22.4" y="35.2" width="54.6" height="1.8" fill="#8e9194"/>
<g fill="none" stroke="#c3cdd4"><circle cx="44" cy="51" r="6.3" stroke-width="4.6"/><circle cx="44" cy="51" r="9.6" stroke-width="2.6" stroke-dasharray="3 3.03"/><circle cx="58" cy="63" r="4.2" stroke-width="3.2"/><circle cx="58" cy="63" r="6.6" stroke-width="2.2" stroke-dasharray="2.4 2.78"/></g>
</svg>
<div class="dlabel" style="left:110px;top:437px">Utilities</div>

<!-- Recycle Bin (stand) -->
<svg class="abs" style="left:0;top:495px" width="110" height="110">
<rect x="52.7" y="7" width="5.6" height="41" fill="#8e4e00"/><rect x="53.4" y="7" width="2.4" height="41" fill="#a86400"/>
<path d="M36 53 L55.5 68 L75 53" fill="none" stroke="#6a2200" stroke-width="1.6"/>
<path d="M41 60 L47 53 M70 60 L64 53" fill="none" stroke="#8a4a00" stroke-width="1.6"/>
<rect x="54" y="50" width="3" height="14" fill="#7a3800"/>
<rect x="24.5" y="47" width="59.2" height="5" fill="#a06c00"/><rect x="26" y="48.2" width="6" height="2.4" fill="#d8a020"/>
<rect x="52.7" y="62" width="5.2" height="39.5" fill="#c48c00"/>
<path d="M41.8 60.5 L34.5 88" stroke="#c89000" stroke-width="3.4" fill="none"/>
<path d="M69.3 60.5 L75.6 87" stroke="#b47c00" stroke-width="3.4" fill="none"/>
</svg>
<div class="dlabel" style="left:0;top:602px">Recycle Bin</div>

<!-- Art Programs -->
<svg class="abs" style="left:24px;top:677px;overflow:visible" width="80" height="90"><use href="#folder"/>
<rect x="22.4" y="35.4" width="53.2" height="39.8" fill="#e6e4da" stroke="#f4f4f4" stroke-width="1.4"/>
<path d="M31 42 L36 38 L52 37 L58 38 L50 47 L46 53 L40 55 L30 54 L32 48 Z" fill="#f26a1c"/>
<path d="M58 38 L66 37 L64 46 L60 54 L54 62 L46 64 L46 56 L50 47 Z" fill="#86b02a"/>
<path d="M23.5 62 C32 58 44 62 52 74.5 H23.5 Z" fill="#9a6a3a"/>
<path d="M52 56 L57 74 M62 58 L64 74" stroke="#c8c2b6" stroke-width="2" fill="none"/>
<path d="M63.6 66 L64.6 74.5" stroke="#c0282c" stroke-width="2.6"/>
<path d="M57 50 L68 50 L65 58 L60 58 Z" fill="#b89a78"/>
<ellipse cx="52" cy="55" rx="1.8" ry="2.4" fill="#b08a6a"/>
</svg>
<div class="dlabel" style="left:0;top:767px">Art Programs</div>
<!--ICONS_END-->
<div id="ac">
<!--ACBG_START-->
<svg class="abs" style="left:0;top:0" width="361" height="870" viewBox="0 0 361 870"><defs><filter id="bl" x="-20%" y="-20%" width="140%" height="140%"><feGaussianBlur stdDeviation="6.5"/></filter></defs>
<g fill="none" stroke="#fff" stroke-linecap="round" stroke-linejoin="round" filter="url(#bl)" opacity="0.16">
<path d="M231.0 126.0 C232.5 127.4 238.5 130.3 239.7 134.7 C240.9 139.0 238.3 149.1 238.0 152.0" stroke-width="34.0" stroke-opacity="0.55"/>
<path d="M219.5 134.7 C225.3 134.2 248.4 132.2 254.1 131.8" stroke-width="16.0" stroke-opacity="0.35"/>
<path d="M207.9 154.9 C211.8 153.9 221.4 148.6 231.0 149.1 C240.7 149.6 259.9 156.3 265.7 157.8" stroke-width="8.0" stroke-opacity="0.50"/>
<path d="M233.9 152.0 C232.7 162.6 229.6 192.4 226.4 215.5 C223.2 238.6 219.2 266.5 214.9 290.6 C210.5 314.7 205.2 332.0 200.4 359.9 C195.6 387.8 190.5 428.3 186.0 458.1 C181.5 488.0 178.1 513.5 173.3 539.0 C168.5 564.5 159.8 599.1 157.1 611.2" stroke-width="20.0" stroke-opacity="0.90"/>
<path d="M285.9 221.3 C283.7 230.0 277.7 255.0 272.6 273.3 C267.5 291.6 262.0 317.6 255.3 331.0 C248.6 344.5 236.0 350.3 232.2 354.1" stroke-width="14.0" stroke-opacity="0.70"/>
<path d="M249.5 215.5 C248.8 225.1 247.5 254.0 244.9 273.3 C242.3 292.5 235.8 321.4 233.9 331.0" stroke-width="10.0" stroke-opacity="0.60"/>
<path d="M254.1 215.5 C259.9 217.0 283.0 222.7 288.8 224.2" stroke-width="10.0" stroke-opacity="0.60"/>
<path d="M76.2 221.3 C87.3 217.7 131.1 201.7 144.4 202.8 C157.7 204.0 154.5 216.5 156.0 228.2 C157.4 240.0 159.6 261.4 153.1 273.3 C146.5 285.1 127.7 300.0 116.7 299.3 C105.6 298.5 93.1 281.2 86.6 268.7 C80.2 256.1 79.7 232.1 78.0 224.2 C76.2 216.3 65.2 224.9 76.2 221.3Z" stroke-width="11.0" stroke-opacity="0.90"/>
<path d="M104.0 244.4 C107.3 243.4 121.3 233.8 124.2 238.6 C127.1 243.4 121.8 267.5 121.3 273.3" stroke-width="10.0" stroke-opacity="0.35"/>
<path d="M86.6 268.7 C81.5 270.6 63.5 271.7 56.0 280.2 C48.5 288.7 43.6 307.2 41.6 319.5 C39.6 331.8 43.5 348.4 43.9 354.1" stroke-width="10.0" stroke-opacity="0.80"/>
<path d="M116.7 299.3 C119.9 302.6 132.3 310.3 135.7 319.5 C139.2 328.6 137.2 348.4 137.5 354.1" stroke-width="9.0" stroke-opacity="0.60"/>
<path d="M137.5 354.1 C138.6 345.0 138.4 310.6 144.4 299.3 C150.4 287.9 163.5 282.4 173.3 286.0 C183.1 289.5 199.3 308.1 203.3 320.6 C207.4 333.2 198.5 354.3 197.5 361.1" stroke-width="11.0" stroke-opacity="0.85"/>
<path d="M86.6 423.5 C91.5 414.8 103.0 382.8 115.5 371.5 C128.0 360.1 147.3 359.1 161.7 355.3 C176.2 351.4 188.7 348.4 202.2 348.4 C215.6 348.4 229.1 348.6 242.6 355.3 C256.1 362.0 273.4 373.6 283.0 388.8 C292.7 404.0 298.4 429.2 300.4 446.6 C302.3 463.9 298.2 481.0 294.6 492.8 C290.9 504.5 286.9 513.9 278.4 517.0 C269.9 520.1 253.4 509.3 243.7 511.3 C234.1 513.2 225.5 521.1 220.6 528.6 C215.8 536.1 212.9 548.6 214.9 556.3 C216.8 564.0 224.5 571.7 232.2 574.8 C239.9 577.9 252.4 570.9 261.1 574.8 C269.7 578.6 280.3 594.0 284.2 597.9" stroke-width="11.0" stroke-opacity="0.85"/>
<path d="M86.6 423.5 C84.7 429.2 77.0 447.3 75.1 458.1 C73.2 468.9 71.2 484.3 75.1 488.1 C78.9 492.0 90.3 480.3 98.2 481.2 C106.1 482.2 117.4 488.0 122.5 493.9 C127.5 499.9 132.1 510.3 128.2 517.0 C124.4 523.8 112.8 527.6 99.3 534.4 C85.9 541.1 59.9 549.8 47.4 557.5 C34.8 565.2 29.3 571.6 24.3 580.6 C19.3 589.5 18.5 606.1 17.3 611.2" stroke-width="11.0" stroke-opacity="0.85"/>
<path d="M135.7 426.3 C141.0 428.3 157.4 434.5 167.5 437.9 C177.6 441.3 191.6 445.1 196.4 446.6" stroke-width="26.0" stroke-opacity="0.50"/>
<path d="M115.5 423.5 C121.3 421.5 137.7 411.9 150.2 411.9 C162.7 411.9 183.9 421.5 190.6 423.5" stroke-width="10.0" stroke-opacity="0.50"/>
<path d="M5.8 342.6 C9.6 343.6 21.2 346.4 28.9 348.4 C36.6 350.3 51.0 351.3 52.0 354.1 C52.9 357.0 42.4 364.3 34.7 365.7 C27.0 367.1 10.6 363.3 5.8 362.8" stroke-width="16.0" stroke-opacity="0.80"/>
<path d="M0.0 409.0 C5.8 408.5 24.5 405.2 34.7 406.1 C44.8 407.1 56.3 413.3 60.6 414.8" stroke-width="9.0" stroke-opacity="0.70"/>
<path d="M17.3 423.5 C17.5 436.9 17.5 478.3 18.5 504.3 C19.4 530.3 22.3 566.9 23.1 579.4" stroke-width="9.0" stroke-opacity="0.60"/>
<path d="M57.8 423.5 C57.3 431.2 56.0 456.2 54.9 469.7 C53.7 483.1 51.5 498.5 50.8 504.3" stroke-width="9.0" stroke-opacity="0.60"/>
<path d="M0.0 377.2 C4.8 379.2 19.3 384.9 28.9 388.8 C38.5 392.7 52.9 398.4 57.8 400.4" stroke-width="8.0" stroke-opacity="0.50"/>
<path d="M34.7 302.2 C32.7 306.0 27.0 319.5 23.1 325.3 C19.3 331.0 13.5 334.9 11.6 336.8" stroke-width="8.0" stroke-opacity="0.50"/>
<path d="M69.3 504.3 C66.4 512.0 57.8 533.2 52.0 550.5 C46.2 567.9 37.5 598.7 34.7 608.3" stroke-width="9.0" stroke-opacity="0.55"/>
<path d="M190.6 469.7 C190.6 481.2 192.5 515.9 190.6 539.0 C188.7 562.1 181.0 596.7 179.1 608.3" stroke-width="12.0" stroke-opacity="0.50"/>
<path d="M87.8 417.7 C87.6 430.2 87.8 468.7 86.6 492.8 C85.5 516.8 81.8 550.5 80.9 562.1" stroke-width="9.0" stroke-opacity="0.50"/>
<path d="M49.1 342.6 C50.5 343.9 54.4 348.8 57.8 350.7 C61.1 352.6 67.4 353.6 69.3 354.1" stroke-width="14.0" stroke-opacity="0.60"/>
<path d="M0.0 414.8 C7.7 415.1 34.2 415.9 46.2 416.5 C58.2 417.2 67.9 418.5 72.2 418.8" stroke-width="8.0" stroke-opacity="0.50"/>
<path d="M0.0 446.6 C1.9 456.2 10.6 479.3 11.6 504.3 C12.5 529.3 6.7 581.3 5.8 596.7" stroke-width="10.0" stroke-opacity="0.40"/>
<path d="M115.5 504.3 C114.6 513.9 112.6 543.8 109.7 562.1 C106.9 580.4 100.1 605.4 98.2 614.1" stroke-width="9.0" stroke-opacity="0.40"/>
</g></svg>
<!--ACBG_END-->
<h1>ACTION CENTER</h1>
<div class="nn">No new notifications</div>
<div class="col">Collapse</div>
<div class="tile " style="left:5px;top:614px"><!--i-tablet--><svg width="28" height="26" viewBox="0 0 28 26" style="left:0;top:0" fill="none" stroke="#fff" stroke-width="1.1"><path d="M14 15.5 H4.5 V5.6 H18.6 V10.5"/><path d="M13.4 13.5 V9.2 Q13.4 8 14.5 8 Q15.6 8 15.6 9.2 V12 L18.4 12.8 Q19.6 13.2 19.6 14.6 V16.4 Q19.6 19.8 15.8 19.8 Q12 19.8 11.8 16 Q11.7 14.4 13.4 13.5"/></svg><span>Tablet mode</span></div>
<div class="tile " style="left:94px;top:614px"><!--i-net--><svg width="28" height="26" viewBox="0 0 28 26" style="left:0;top:0" fill="none" stroke="#fff" stroke-width="1.1"><path d="M5.9 19.6 A10.2 10.2 0 0 1 16 9.4 M8.9 19.6 A7.2 7.2 0 0 1 16 12.4 M11.9 19.6 A4.2 4.2 0 0 1 16 15.4" stroke-width="1.3"/><rect x="14.6" y="17.8" width="1.8" height="1.8" fill="#fff" stroke="none"/><path d="M17.6 19.8 V10.5 M15.4 5.6 H20 V10.5 H15.4 Z M16.6 7.6 H18.8"/></svg><span>Network</span></div>
<div class="tile " style="left:183px;top:614px"><!--i-note--><svg width="28" height="26" viewBox="0 0 28 26" style="left:0;top:0" fill="none" stroke="#fff" stroke-width="1.1"><path d="M9.5 18.6 H18.4 V5.6 H5.5 V14.6 Z M5.5 14.6 H9.5 V18.6"/></svg><span>Note</span></div>
<div class="tile " style="left:272px;top:614px"><!--i-gear--><svg width="28" height="26" viewBox="0 0 28 26" style="left:0;top:0" fill="none" stroke="#fff" stroke-width="1.1"><path d="M19.78 10.52 L19.78 13.28 L17.83 13.32 L17.10 15.09 L18.45 16.50 L16.50 18.45 L15.09 17.10 L13.32 17.83 L13.28 19.78 L10.52 19.78 L10.48 17.83 L8.71 17.10 L7.30 18.45 L5.35 16.50 L6.70 15.09 L5.97 13.32 L4.02 13.28 L4.02 10.52 L5.97 10.48 L6.70 8.71 L5.35 7.30 L7.30 5.35 L8.71 6.70 L10.48 5.97 L10.52 4.02 L13.28 4.02 L13.32 5.97 L15.09 6.70 L16.50 5.35 L18.45 7.30 L17.10 8.71 L17.83 10.48Z" stroke-linejoin="round"/><circle cx="11.9" cy="11.9" r="2.5"/></svg><span>All settings</span></div>
<div class="tile " style="left:5px;top:678px"><!--i-plane--><svg width="28" height="26" viewBox="0 0 28 26" style="left:0;top:0" fill="none" stroke="#fff" stroke-width="1.1"><path d="M19.8 12 Q19.8 10.4 17.6 10.4 H13.4 L11.2 4.6 H9 L10.2 10.4 H7 L5.6 8.8 H4.3 L4.8 12 L4.3 15.2 H5.6 L7 13.6 H10.2 L9 19.6 H11.2 L13.4 13.6 H17.6 Q19.8 13.6 19.8 12 Z" stroke-linejoin="round"/></svg><span>Airplane mode</span></div>
<div class="tile on" style="left:94px;top:678px"><!--i-loc--><svg width="28" height="26" viewBox="0 0 28 26" style="left:0;top:0" fill="none" stroke="#fff" stroke-width="1.1"><circle cx="11.6" cy="6.3" r="2.2"/><path d="M11.6 8.5 V15.6 M8.1 11 H15.4 L18.7 19.6 H4.3 Z"/></svg><span>Location</span></div>
<div class="tile " style="left:183px;top:678px"><!--i-moon--><svg width="28" height="26" viewBox="0 0 28 26" style="left:0;top:0" fill="none" stroke="#fff" stroke-width="1.1"><path d="M12.4 4.5 C17 5.5 19.6 9 19 13.4 C18.2 18 13.8 20.6 9.6 19.4 C7.4 18.8 5.6 17.6 4.4 16.2 C9.6 16.6 14.6 12 12.4 4.5 Z" stroke-linejoin="round"/></svg><span>Quiet hours</span></div>
<div class="tile dis" style="left:272px;top:678px"><!--i-hot--><svg width="28" height="26" viewBox="0 0 28 26" style="left:0;top:0" fill="none" stroke="#9c9c9c" stroke-width="1.1"><path d="M11.5 8.8 V19.8"/><path d="M8.8 8.4 A4 4 0 0 0 8.8 14 M14.2 8.4 A4 4 0 0 1 14.2 14 M6.4 5.6 A7.6 7.6 0 0 0 6.4 16.4 M16.6 5.6 A7.6 7.6 0 0 1 16.6 16.4"/></svg><span>Mobile<br>hotspot</span></div>
<div class="tile " style="left:5px;top:742px"><!--i-sun--><svg width="28" height="26" viewBox="0 0 28 26" style="left:0;top:0" fill="none" stroke="#fff" stroke-width="1.1"><circle cx="11.5" cy="11.5" r="3.1"/><path d="M16.50 11.50 L19.10 11.50 M15.04 15.04 L16.87 16.87 M11.50 16.50 L11.50 19.10 M7.96 15.04 L6.13 16.87 M6.50 11.50 L3.90 11.50 M7.96 7.96 L6.13 6.13 M11.50 6.50 L11.50 3.90 M15.04 7.96 L16.87 6.13 " stroke-width="1.2"/></svg><span>Brightest</span></div>
<div class="tile " style="left:94px;top:742px"><!--i-night--><svg width="28" height="26" viewBox="0 0 28 26" style="left:0;top:0" fill="none" stroke="#fff" stroke-width="1.1"><circle cx="11.6" cy="11.5" r="4.4" fill="#fff" stroke="none"/><ellipse cx="10.2" cy="10" rx="2.2" ry="1.5" transform="rotate(-40 10.2 10)" fill="#5a5a5a" stroke="none"/><path d="M17.40 11.50 L19.40 11.50 M15.70 15.60 L17.12 17.02 M11.60 17.30 L11.60 19.30 M7.50 15.60 L6.08 17.02 M5.80 11.50 L3.80 11.50 M7.50 7.40 L6.08 5.98 M11.60 5.70 L11.60 3.70 M15.70 7.40 L17.12 5.98 " stroke-width="1.2"/></svg><span>Night light</span></div>
<div class="tile " style="left:183px;top:742px"><!--i-vpn--><svg width="28" height="26" viewBox="0 0 28 26" style="left:0;top:0" fill="none" stroke="#fff" stroke-width="1.1"><circle cx="6.4" cy="10.4" r="1.9"/><circle cx="16.4" cy="10.4" r="1.9"/><circle cx="11.4" cy="15.4" r="1.9"/><path d="M15 8.9 L10.2 13.8 M8.3 10.6 L10.6 12.6" stroke-width="1.2"/><path d="M10.3 8.3 L11.4 9.5 L12.5 8.3" stroke-width="0.8"/></svg><span>VPN</span></div>
<div class="tile dis" style="left:272px;top:742px"><!--i-leaf--><svg width="28" height="26" viewBox="0 0 28 26" style="left:0;top:0" fill="none" stroke="#9c9c9c" stroke-width="1.1"><path d="M11.5 4.4 C14 6.2 16 8.4 16 10.8 C16 13.6 14 15.6 11.5 15.6 C9 15.6 7 13.6 7 10.8 C7 8.4 9 6.2 11.5 4.4 Z M11.5 8.4 V19.8"/></svg><span>Battery saver</span></div>
<div class="tile " style="left:5px;top:806px"><!--i-proj--><svg width="28" height="26" viewBox="0 0 28 26" style="left:0;top:0" fill="none" stroke="#fff" stroke-width="1.1"><path d="M8.8 10.4 V6 H19.7 V14.7 H13.8"/><path d="M5.3 16 V10.7 H13.5 V16 M4.1 16.1 H14.7 V17.7 H4.1 Z"/></svg><span>Project</span></div>
<div class="tile " style="left:94px;top:806px"><!--i-conn--><svg width="28" height="26" viewBox="0 0 28 26" style="left:0;top:0" fill="none" stroke="#fff" stroke-width="1.1"><path d="M12.7 11.9 H4.2 V5.1 H14.7 V8.8 M9.7 11.9 V13.5 M7.2 13.5 H11.7"/><rect x="12.9" y="9" width="7" height="9.7"/><circle cx="16.5" cy="12.4" r="1.1"/><rect x="15.6" y="15.2" width="1.8" height="1.8" fill="#fff" stroke="none"/></svg><span>Connect</span></div>
</div>
<div id="tb">
<!--TBICONS_START-->
<svg class="abs" style="left:0;top:0" width="1440" height="30" viewBox="0 870 1440 30">
<!-- action center button highlight -->
<rect x="1387" y="870" width="41" height="30" fill="#2e2e2e"/>
<!-- windows logo -->
<g fill="#fff">
<path d="M9.9 879.4 L16.1 878.5 V884.4 H9.9 Z"/><path d="M16.9 878.4 L26 877 V884.4 H16.9 Z"/>
<path d="M9.9 885.2 H16.1 V891.2 L9.9 890.3 Z"/><path d="M16.9 885.2 H26 V892.8 L16.9 891.4 Z"/>
</g>
<!-- task view -->
<g fill="none" stroke="#fff" stroke-width="1.2">
<rect x="48.4" y="878.6" width="11.4" height="12.8"/>
<path d="M46.8 880.4 H44.6 V889.4 H46.8 M61.4 880.4 H63.6 V889.4 H61.4"/>
</g>
<!-- file explorer -->
<g>
<path d="M85 878.2 H90.2 L91.4 879.6 H101.2 V891.6 H85 Z" fill="#f4c443"/>
<rect x="85" y="880.4" width="16.2" height="11.2" fill="#ffe699"/>
<rect x="85.8" y="878.9" width="3.6" height="0.9" fill="#fff"/>
<path d="M88.2 891.6 V887 Q88.2 885.6 89.6 885.6 H96.6 Q98 885.6 98 887 V891.6 H95.4 V888.4 H90.8 V891.6 Z" fill="#2f9fe6"/>
</g>
<!-- chrome -->
<g>
<circle cx="130" cy="885.2" r="7.3" fill="#db4437"/>
<path d="M130 885.2 L123.68 881.55 A7.3 7.3 0 0 0 133.2 891.76 Z" fill="#0f9d58"/>
<path d="M130 885.2 L133.2 891.76 A7.3 7.3 0 0 0 136.32 881.55 L130 881.9 Z" fill="#ffcd40"/>
<path d="M123.68 881.55 A7.3 7.3 0 0 1 136.32 881.55 L130 881.55 Z" fill="#db4437"/>
<circle cx="130" cy="885.2" r="3.4" fill="#f1f1f1"/>
<circle cx="130" cy="885.2" r="2.6" fill="#4285f4"/>
</g>
<!-- store -->
<g>
<path d="M164 880.6 C164 876.6 170 876.6 170 880.6" fill="none" stroke="#e8e8e8" stroke-width="1.1"/>
<path d="M159.4 880.5 H174 L173.4 892 H160 Z" fill="#fff"/>
<rect x="163" y="883.2" width="3" height="3" fill="#f25022"/><rect x="167" y="883.2" width="3" height="3" fill="#7fba00"/>
<rect x="163" y="887.1" width="3" height="3" fill="#00a4ef"/><rect x="167" y="887.1" width="3" height="3" fill="#ffb900"/>
</g>
<!-- mail -->
<g>
<path d="M195.8 882 L204.1 877.5 L212.3 882 V891.1 H195.8 Z" fill="#fff"/>
<path d="M197 883 L205 886.6 L209 883.4 L204.4 884.4 Z" fill="#202020"/>
<path d="M205 886.6 L209 883.4 L208.6 889 Z" fill="#202020"/>
</g>
<!-- reaper-ish shield -->
<g>
<path d="M235 880.6 C238 876 245 876 248 880.6 L247.6 884 C246 888.6 243.6 891 241.4 892 C238 890.4 235.4 887 234.2 883 Z" fill="#8c7c84"/>
<path d="M235 880.6 C238 876 245 876 248 880.6 C244 878.4 239 878.6 235 880.6 Z" fill="#3f68b4"/>
<path d="M234.2 882.4 C234.4 881.6 234.8 881 235.2 880.6 C238 882 240 885 240.6 888.4 C240.8 889.8 241 891 241.4 892 C238 890.4 235.4 887 234.2 882.4 Z" fill="#62bf5a"/>
<path d="M235.4 880.4 C238.6 880.4 241 883 241.2 887.6 L241.3 891" fill="none" stroke="#fff" stroke-width="1"/>
<path d="M236.6 880 C240 879 245 880 247.6 882.4" fill="none" stroke="#6a88c4" stroke-width=".9"/>
</g>
<!-- edge -->
<g>
<path d="M270.4 884.2 C271.4 879.6 274.6 877 278.4 877 C283 877 285.4 880.6 285.3 885.6 H275.4 C275.6 888 277.4 889.6 280 889.6 C281.8 889.6 283.4 889.2 284.8 888.4 V891.8 C283.2 892.7 281.4 893.1 279.2 893.1 C274.6 893.1 271.6 890.2 271.6 886 C271.6 884 272.4 882.4 273.6 881.2 C272.2 881.8 271.2 882.8 270.4 884.2 Z M275.5 883 H281 C281 881.2 280 880 278.4 880 C276.8 880 275.8 881.2 275.5 883 Z" fill="#0a78d6" fill-rule="evenodd"/>
</g>
<!-- film M icon -->
<g>
<path d="M306.8 877 H312 L320 893 H306.8 Z" fill="#1b9fe9"/>
<path d="M312 877 H323.2 V893 H320 Z" fill="#e8e8e8"/>
<path d="M312 877 H318 L315.4 883.4 Z" fill="#2a2a2a"/>
<path d="M318 877 H323.2 V880 L318.6 888.6 L315.4 883.4 Z" fill="#d0d0d0"/>
<path d="M320.4 882 L322.6 881 V891 L321 892 Z" fill="#fff"/>
<g fill="#17456a"><rect x="309.4" y="879.4" width="1.4" height="1.4"/><rect x="310.8" y="882.6" width="1.4" height="1.4"/><rect x="312.4" y="885.8" width="1.4" height="1.4"/><rect x="314" y="889" width="1.4" height="1.4"/></g>
<g fill="#555"><rect x="319.6" y="879" width="1.2" height="1.2"/><rect x="318.6" y="882" width="1.2" height="1.2"/></g>
</g>
<!-- settings gear -->
<path d="M358.12 886.39 L357.36 888.24 L355.62 887.60 L354.60 888.62 L355.24 890.36 L353.39 891.12 L352.62 889.44 L351.18 889.44 L350.41 891.12 L348.56 890.36 L349.20 888.62 L348.18 887.60 L346.44 888.24 L345.68 886.39 L347.36 885.62 L347.36 884.18 L345.68 883.41 L346.44 881.56 L348.18 882.20 L349.20 881.18 L348.56 879.44 L350.41 878.68 L351.18 880.36 L352.62 880.36 L353.39 878.68 L355.24 879.44 L354.60 881.18 L355.62 882.20 L357.36 881.56 L358.12 883.41 L356.44 884.18 L356.44 885.62Z M354.5 884.9 A2.6 2.6 0 1 0 349.3 884.9 A2.6 2.6 0 1 0 354.5 884.9 Z" fill="#fff" fill-rule="evenodd"/>
<rect x="338" y="898" width="27.8" height="2" fill="#bdbdbd"/>
<!-- tray chevron -->
<path d="M1236.2 888 L1242 882.2 L1247.8 888" fill="none" stroke="#fff" stroke-width="1.2"/>
<!-- speaker -->
<g fill="none" stroke="#fff" stroke-width="1.1">
<path d="M1258 882.8 H1260.4 L1263.8 879.6 V890.4 L1260.4 887.2 H1258 Z"/>
<path d="M1266 882.8 A3.2 3.2 0 0 1 1266 887.2" stroke="#fff"/>
<path d="M1268 880.8 A5.8 5.8 0 0 1 1268 889.2" stroke="#bbb"/>
<path d="M1270 878.8 A8.6 8.6 0 0 1 1270 891.2" stroke="#777"/>
</g>
<!-- battery plugged -->
<g>
<rect x="1287.2" y="881.8" width="9.8" height="7.8" fill="none" stroke="#fff" stroke-width="1.1"/>
<rect x="1297" y="884" width="1.3" height="3.4" fill="#fff"/>
<rect x="1288.6" y="883.2" width="7" height="5" fill="#fff"/>
<path d="M1283.4 879.2 V881 M1286 879.2 V881 M1282.6 881 H1286.8 V883.4 Q1286.8 885 1284.7 885 Q1282.6 885 1282.6 883.4 Z M1284.7 885 V887.6 Q1284.7 889.4 1287 889.4" fill="none" stroke="#fff" stroke-width="1.1"/>
<rect x="1282.8" y="881.2" width="3.8" height="3" fill="#fff"/>
</g>
<!-- wifi w/ red x -->
<g fill="none" stroke="#8a8a8a" stroke-width="1.1">
<path d="M1309.4 890.8 A10.4 10.4 0 0 1 1321 880.5"/><path d="M1312.3 890.8 A7.4 7.4 0 0 1 1321 883.5"/><path d="M1315.5 890.8 A4.2 4.2 0 0 1 1321 886.8"/>
</g>
<circle cx="1319.6" cy="890.6" r="1.3" fill="#8a8a8a"/>
<circle cx="1310.3" cy="888.3" r="4.2" fill="#d92b2b"/>
<path d="M1308.4 886.4 L1312.2 890.2 M1312.2 886.4 L1308.4 890.2" stroke="#fff" stroke-width="1.1"/>
<!-- notification -->
<path d="M1399.8 877.4 H1414.4 V889.4 H1409.4 L1407.1 891.8 L1404.8 889.4 H1399.8 Z" fill="none" stroke="#fff" stroke-width="1.2"/>
<rect x="1435" y="870" width="1" height="30" fill="#7a7a7a"/>
</svg>
<!--TBICONS_END-->
<div id="clock">9:41 AM</div>
</div>
</div>
</body>
</html>
